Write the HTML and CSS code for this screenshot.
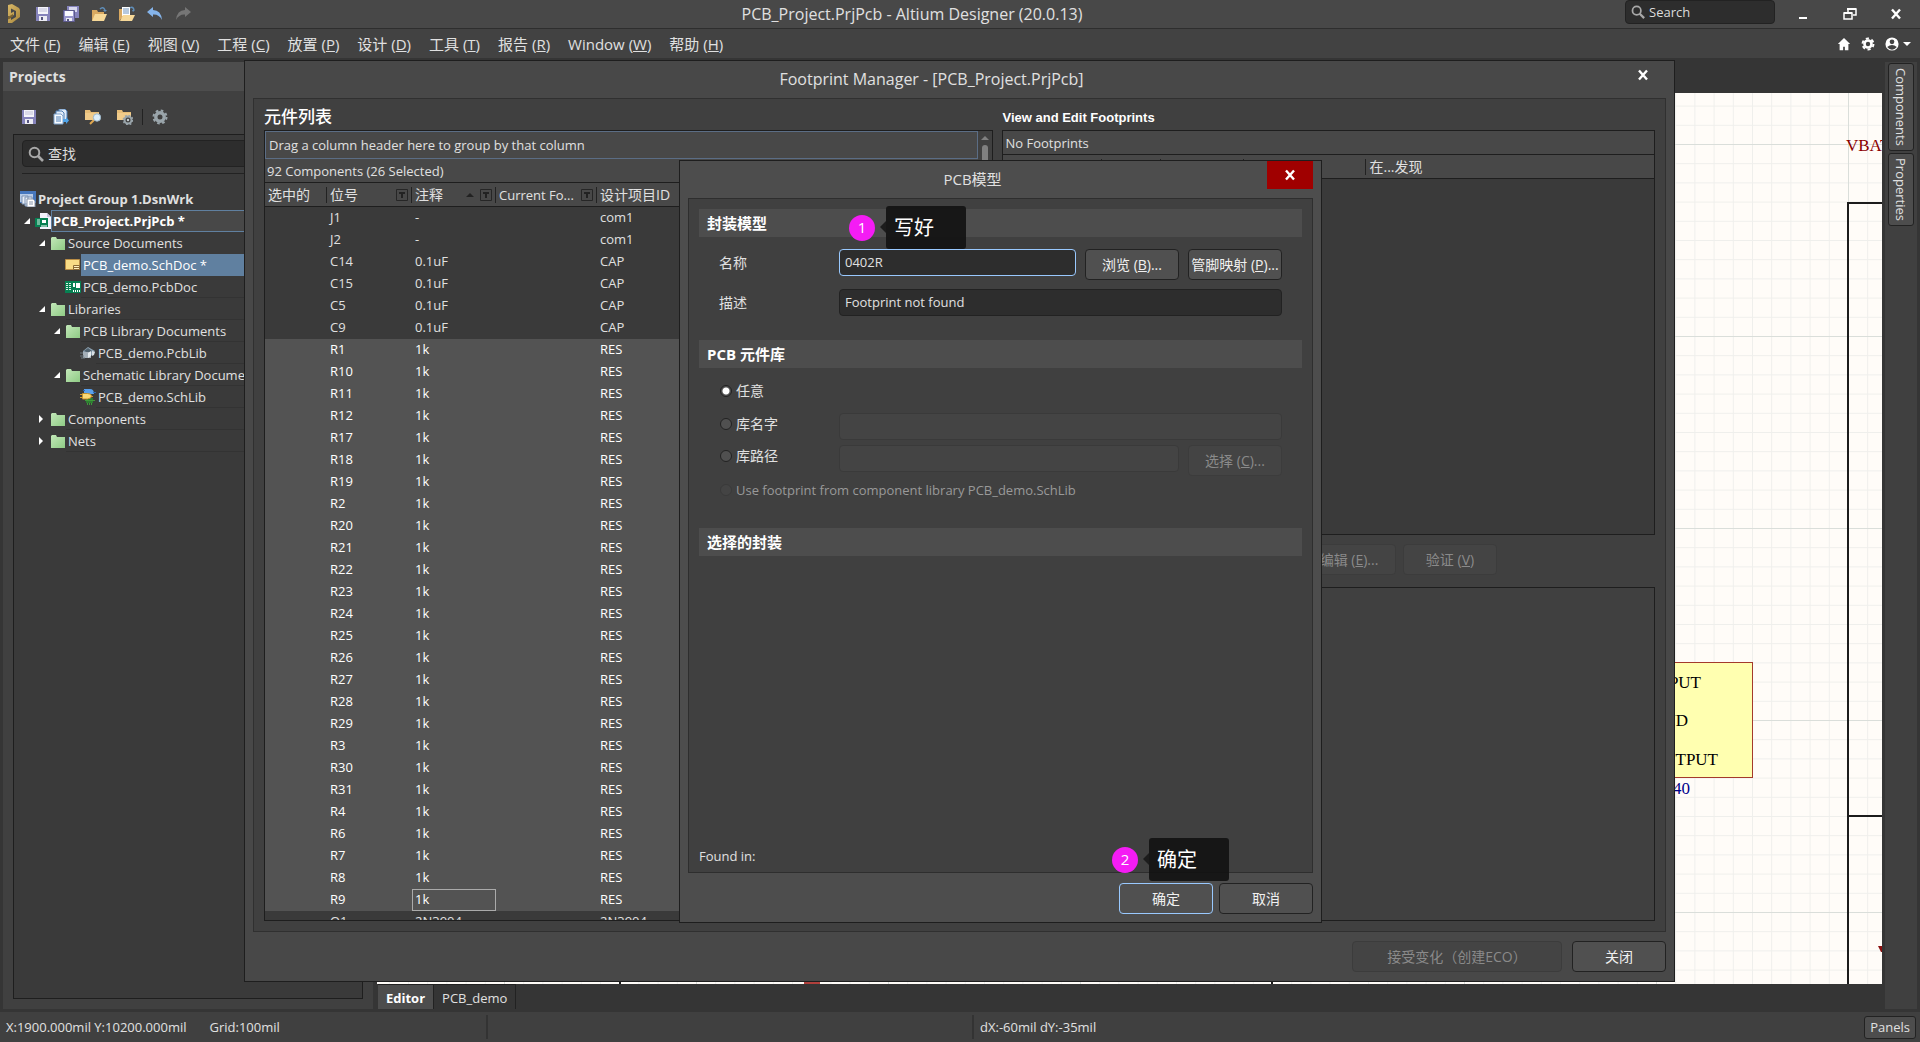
FILE: index.html
```html
<!DOCTYPE html>
<html lang="zh-CN">
<head>
    <meta charset="UTF-8">
    <meta name="viewport" content="width=device-width, initial-scale=1.0">
    <title>PCB_Project.PrjPcb - Altium Designer (20.0.13)</title>
    <link rel="stylesheet" href="styles.css">
</head>
<body>
    <!-- shared icons -->
    <svg class="defs" aria-hidden="true">
        <defs>
            <linearGradient id="gold" x1="0" y1="0" x2="1" y2="1">
                <stop offset="0" stop-color="#d9b968"/>
                <stop offset="1" stop-color="#a8863c"/>
            </linearGradient>
            <linearGradient id="green" x1="0" y1="0" x2="1" y2="1">
                <stop offset="0" stop-color="#c3e8b9"/>
                <stop offset="1" stop-color="#8fcb85"/>
            </linearGradient>
        </defs>
        <symbol id="i-logo" viewBox="0 0 14 20">
            <path d="M1 1 L5 0 L12 4 L13 6 V13 L5 19 L1 19 V15 L4 14 V16 L9 13 V7 L4 4.500 V9 L7 7.500 V11 L3 13 L1 12 Z" fill="url(#gold)"/>
            <path d="M1 13 L6 10 V12.500 L1 15.500 Z" fill="#7d6430"/>
        </symbol>
        <symbol id="i-save" viewBox="0 0 16 16">
            <path d="M1 1h14v14H1z" fill="#8583bb"/>
            <path d="M3 1h10v7H3z" fill="#f4f4fa"/>
            <path d="M4 3h8M4 5h8" stroke="#c0c0d8"/>
            <path d="M4 10h8v5H4z" fill="#ececf4"/>
            <path d="M6 11h2v3H6z" fill="#55547f"/>
        </symbol>
        <symbol id="i-saveall" viewBox="0 0 16 16">
            <path d="M4 0h12v12H4z" fill="#8583bb"/>
            <path d="M6 1h8v5H6z" fill="#d9d9ee"/>
            <path d="M.5 4.500h11v11H.5z" fill="#9896cc" stroke="#5c5a8c"/>
            <path d="M2 5h8v5H2z" fill="#fafaff"/>
            <path d="M3 12h6v3H3z" fill="#ececf4"/>
            <path d="M4 13h2v2H4z" fill="#55547f"/>
        </symbol>
        <symbol id="i-open" viewBox="0 0 16 16">
            <path d="M1 15V4h5l1 2h6v3" fill="#d9a961"/>
            <path d="M1 15L4 8h12l-3 7z" fill="#f6d898"/>
            <path d="M9 3q3-3 5 1" fill="none" stroke="#5f8db8" stroke-width="1.500"/>
            <path d="M12 4h4l-2 2z" fill="#5f8db8"/>
        </symbol>
        <symbol id="i-openprj" viewBox="0 0 16 16">
            <path d="M0 15V3h4v8" fill="#d9a961"/>
            <path d="M3 1h8v9H3z" fill="#fff"/>
            <path d="M4 3h6M4 5h6M4 7h6" stroke="#6f93bd"/>
            <path d="M1 15L4 9h12l-3 6z" fill="#f6d898"/>
            <path d="M11 2q3-2 4 2" fill="none" stroke="#5f8db8" stroke-width="1.500"/>
            <path d="M13 4h3l-2 2z" fill="#5f8db8"/>
        </symbol>
        <symbol id="i-undo" viewBox="0 0 16 16">
            <path d="M0 6L6 1V4Q14 4 15 14Q12 8 6 8.500V11Z" fill="#85b4ea"/>
        </symbol>
        <symbol id="i-redo" viewBox="0 0 16 16">
            <path d="M16 6L10 1V4Q2 4 1 14Q4 8 10 8.500V11Z" fill="#767676"/>
        </symbol>
        <symbol id="i-search" viewBox="0 0 16 16">
            <circle cx="6.500" cy="6.500" r="4.800" fill="none" stroke="#a8a8a8" stroke-width="2"/>
            <path d="M10 10l5 5" stroke="#a8a8a8" stroke-width="2.600"/>
        </symbol>
        <symbol id="i-copy" viewBox="0 0 16 16">
            <path d="M6 0h6l2 2v9H6z" fill="#dfeaf7" stroke="#4f7fb5"/>
            <path d="M3 2h6l2 2v9H3z" fill="#dfeaf7" stroke="#4f7fb5"/>
            <path d="M1 5h7l2 2v8H1z" fill="#f7fbff" stroke="#7fa3cc"/>
            <path d="M3 8h5M3 10h5M3 12h5" stroke="#4f7fb5"/>
            <path d="M10 10h3V8l3 3.500-3 3.500v-2h-3z" fill="#4fa3e8"/>
        </symbol>
        <symbol id="i-foldersearch" viewBox="0 0 16 16">
            <path d="M0 1h5l1 2h8v8H0z" fill="#e6bd78"/>
            <path d="M0 4h14v7H0z" fill="#f0cb8a"/>
            <path d="M5 15l4-4" stroke="#e0a850" stroke-width="2"/>
            <circle cx="12" cy="8.500" r="3.700" fill="#dceefa" stroke="#9bb6c9"/>
        </symbol>
        <symbol id="i-foldergear" viewBox="0 0 16 16">
            <path d="M0 1h5l1 2h8v8H0z" fill="#e6bd78"/>
            <path d="M0 4h14v7H0z" fill="#f0cb8a"/>
            <circle cx="11" cy="11" r="3.500" fill="#404040" stroke="#9aa5ab" stroke-width="2"/>
            <circle cx="11" cy="11" r="4.700" fill="none" stroke="#9aa5ab" stroke-width="1.400" stroke-dasharray="1.800 1.890"/>
            <circle cx="11" cy="11" r="1.200" fill="#c4ccd0"/>
        </symbol>
        <symbol id="i-gear" viewBox="0 0 16 16">
            <circle cx="8" cy="8" r="4.200" fill="none" stroke="currentColor" stroke-width="3.400"/>
            <circle cx="8" cy="8" r="6.500" fill="none" stroke="currentColor" stroke-width="2" stroke-dasharray="2.600 2.500"/>
        </symbol>
        <symbol id="i-cog" viewBox="0 0 16 16">
            <circle cx="8" cy="8" r="4" fill="none" stroke="#fff" stroke-width="3"/>
            <circle cx="8" cy="8" r="6.300" fill="none" stroke="#fff" stroke-width="2.200" stroke-dasharray="3.600 3"/>
        </symbol>
        <symbol id="i-home" viewBox="0 0 16 16">
            <path d="M8 1L1 8h2v7h4v-4h2v4h4V8h2z" fill="#fff"/>
        </symbol>
        <symbol id="i-user" viewBox="0 0 16 16">
            <circle cx="8" cy="8" r="7.500" fill="#fff"/>
            <circle cx="8" cy="5.500" r="2.700" fill="#424242"/>
            <path d="M2.500 11.500Q8 7 13.500 11.500Q11 14.500 8 14.500T2.500 11.500" fill="#424242"/>
        </symbol>
        <symbol id="i-close" viewBox="0 0 12 12">
            <path d="M2 1.500l8 9M10 1.500l-8 9" stroke="#fff" stroke-width="2.400"/>
        </symbol>
        <symbol id="i-group" viewBox="0 0 16 16">
            <path d="M0 0h16v12H0z" fill="#4677bd"/>
            <path d="M0 3h13v8H0z" fill="#b7cbe6"/>
            <path d="M2 5h6v8H2zM5 6h7v9H5z" fill="#e8eef7" stroke="#7d93b3"/>
            <path d="M7 8h6l2 2v6H7z" fill="#fff" stroke="#8795ab"/>
            <path d="M9 11h4M9 13h4" stroke="#8795ab"/>
        </symbol>
        <symbol id="i-project" viewBox="0 0 16 16">
            <path d="M5 0h7l4 4v12H5z" fill="#f3f2fb"/>
            <path d="M12 0v4h4" fill="#c9c6e0"/>
            <path d="M0 5h13v9H0z" fill="#078052"/>
            <path d="M2 7h3M2 9h3M2 11h3" stroke="#d8f2e4"/>
            <path d="M7 7h4v3H7z" fill="#fff"/>
            <path d="M7 12v2M9 12v2M11 12v2" stroke="#fff"/>
        </symbol>
        <symbol id="i-folder" viewBox="0 0 16 16">
            <path d="M1 3l1-1h4l1 2h8v11H1z" fill="url(#green)"/>
        </symbol>
        <symbol id="i-sch" viewBox="0 0 16 16">
            <path d="M.5 2.500h14v10H.5z" fill="#f8dc86" stroke="#b98d45"/>
            <path d="M8.500 8.500h6v4h-6z" fill="#fff0bd" stroke="#8b6a34"/>
            <path d="M9 10.500h5" stroke="#8b6a34"/>
        </symbol>
        <symbol id="i-pcb" viewBox="0 0 16 16">
            <path d="M0 2h16v12H0z" fill="#078052"/>
            <path d="M1 4.500h2M1 6.500h2M1 8.500h2M1 10.500h2M4 4.500h2M4 6.500h2M4 8.500h2M4 10.500h2" stroke="#d8f2e4"/>
            <path d="M8 4h2v4H8zM11 4h4v5h-4z" fill="#fff"/>
            <path d="M8.500 11v2M10.500 11v2M12.500 11v2M14.500 11v2" stroke="#fff"/>
        </symbol>
        <symbol id="i-pcblib" viewBox="0 0 16 16">
            <path d="M3 6l5-4 7 4-4 5H3z" fill="#8fa3b3"/>
            <path d="M4 6l4-3 4 3-3 2z" fill="#4f606c"/>
            <path d="M3 7h8v6H3z" fill="#a4afb8"/>
            <path d="M0 8h3M0 11h4M1 13h4" stroke="#6d7880"/>
            <path d="M8 8l3-2v5l-3 2z" fill="#e4eaee"/>
            <path d="M12 6l3 1-1 3-2 1z" fill="#d8dfe4"/>
        </symbol>
        <symbol id="i-schlib" viewBox="0 0 16 16">
            <path d="M4 0h6q4 0 4 5H4z" fill="#58a0ee"/>
            <path d="M13 3.500h3M3 1.500h2" stroke="#2c66b0"/>
            <path d="M6 9h7v5H6z" fill="#2c7d31"/>
            <path d="M5 11.500h10M7.500 14v2M9.500 14v2M11.500 14v2" stroke="#3f9a3a"/>
            <path d="M2.500 4.500h5q4 0 4 2.500t-4 3h-5z" fill="#f8d877" stroke="#c08e2a"/>
            <path d="M0 5.500h3M0 8.500h3M11 7.500h2" stroke="#d19a2e"/>
        </symbol>
        <symbol id="i-filter" viewBox="0 0 12 12">
            <path d="M.5.5h11v11H.5z" fill="none" stroke="#262626"/>
            <path d="M3 3h6v2H7v4H5V5H3z" fill="#222"/>
        </symbol>
    </svg>

    <header class="titlebar">
        <div class="quick">
            <svg class="logo"><use href="#i-logo"/></svg>
            <button aria-label="Save"><svg><use href="#i-save"/></svg></button>
            <button aria-label="Save All"><svg><use href="#i-saveall"/></svg></button>
            <button aria-label="Open"><svg><use href="#i-open"/></svg></button>
            <button aria-label="Open Project"><svg><use href="#i-openprj"/></svg></button>
            <button aria-label="Undo"><svg><use href="#i-undo"/></svg></button>
            <button aria-label="Redo"><svg><use href="#i-redo"/></svg></button>
        </div>
        <h1>PCB_Project.PrjPcb - Altium Designer (20.0.13)</h1>
        <div class="window-tools">
            <label class="search"><svg><use href="#i-search"/></svg><input type="text" placeholder="Search" aria-label="Search"></label>
            <button aria-label="Minimize"><svg viewBox="0 0 14 14"><path d="M3 10h8v2H3z" fill="#fff"/></svg></button>
            <button aria-label="Restore"><svg viewBox="0 0 14 14"><path d="M5 5V2h8v6h-3M1 6h8v6H1z" fill="none" stroke="#fff" stroke-width="1.500"/><path d="M4 1h9v2H4zM1 5h8v2H1z" fill="#fff"/></svg></button>
            <button aria-label="Close"><svg><use href="#i-close"/></svg></button>
        </div>
    </header>

    <nav class="menubar">
        <a href="#">文件 (<u>F</u>)</a>
        <a href="#">编辑 (<u>E</u>)</a>
        <a href="#">视图 (<u>V</u>)</a>
        <a href="#">工程 (<u>C</u>)</a>
        <a href="#">放置 (<u>P</u>)</a>
        <a href="#">设计 (<u>D</u>)</a>
        <a href="#">工具 (<u>T</u>)</a>
        <a href="#">报告 (<u>R</u>)</a>
        <a href="#">Window (<u>W</u>)</a>
        <a href="#">帮助 (<u>H</u>)</a>
        <div class="account">
            <button aria-label="Home"><svg><use href="#i-home"/></svg></button>
            <button aria-label="Preferences"><svg><use href="#i-cog"/></svg></button>
            <button aria-label="Account"><svg><use href="#i-user"/></svg><i class="caret"></i></button>
        </div>
    </nav>

    <main class="workspace">
        <aside class="projects">
            <h2>Projects</h2>
            <div class="panel-tools">
                <button aria-label="Save"><svg><use href="#i-save"/></svg></button>
                <button aria-label="Copy"><svg><use href="#i-copy"/></svg></button>
                <button aria-label="Explore"><svg><use href="#i-foldersearch"/></svg></button>
                <button aria-label="Options"><svg><use href="#i-foldergear"/></svg></button>
                <i class="divider"></i>
                <button class="gear" aria-label="Settings"><svg><use href="#i-gear"/></svg></button>
            </div>
            <div class="tree-box">
                <label class="search find"><svg><use href="#i-search"/></svg><input type="text" placeholder="查找" aria-label="查找"></label>
                <ul class="tree">
                    <li class="group"><svg><use href="#i-group"/></svg><span>Project Group 1.DsnWrk</span></li>
                    <li class="lv1 project"><i class="open"></i><svg><use href="#i-project"/></svg><span>PCB_Project.PrjPcb *</span></li>
                    <li class="lv2 plain"><i class="open"></i><svg><use href="#i-folder"/></svg><span>Source Documents</span></li>
                    <li class="lv3 active"><i></i><svg><use href="#i-sch"/></svg><span>PCB_demo.SchDoc *</span></li>
                    <li class="lv3"><i></i><svg><use href="#i-pcb"/></svg><span>PCB_demo.PcbDoc</span></li>
                    <li class="lv2"><i class="open"></i><svg><use href="#i-folder"/></svg><span>Libraries</span></li>
                    <li class="lv3"><i class="open"></i><svg><use href="#i-folder"/></svg><span>PCB Library Documents</span></li>
                    <li class="lv4"><i></i><svg><use href="#i-pcblib"/></svg><span>PCB_demo.PcbLib</span></li>
                    <li class="lv3"><i class="open"></i><svg><use href="#i-folder"/></svg><span>Schematic Library Documents</span></li>
                    <li class="lv4"><i></i><svg><use href="#i-schlib"/></svg><span>PCB_demo.SchLib</span></li>
                    <li class="lv2"><i class="shut"></i><svg><use href="#i-folder"/></svg><span>Components</span></li>
                    <li class="lv2"><i class="shut"></i><svg><use href="#i-folder"/></svg><span>Nets</span></li>
                </ul>
            </div>
        </aside>

        <section class="editor">
            <div class="sheet">
                <svg class="drawing" width="1505" height="891">
                    <defs>
                        <pattern id="minor" x="1471" y="51" width="19.200" height="19.200" patternUnits="userSpaceOnUse">
                            <path d="M0 .5H19.200M.5 0V19.200" stroke="#efefec"/>
                        </pattern>
                        <pattern id="major" x="1471" y="51" width="192" height="192" patternUnits="userSpaceOnUse">
                            <path d="M0 .5H192M.5 0V192" stroke="#dadeda"/>
                        </pattern>
                    </defs>
                    <rect width="1505" height="891" fill="url(#minor)"/>
                    <rect width="1505" height="891" fill="url(#major)"/>
                    <path d="M243 880V891M895 880V891M1505 110H1471V891M1471 723H1505" fill="none" stroke="#1c1c1c" stroke-width="2"/>
                    <path d="M427 890h16" stroke="#b0403c" stroke-width="2"/>
                    <rect x="1239.500" y="569.500" width="136" height="115" fill="#ffffb0" stroke="#a33a2c"/>
                    <g class="pins">
                        <text x="1324" y="595">INPUT</text>
                        <text x="1311" y="633">GND</text>
                        <text x="1341" y="672">OUTPUT</text>
                    </g>
                    <text class="value" x="1313" y="701">2940</text>
                    <text class="net" x="1469" y="58">VBAT</text>
                    <path d="M1501 853h4v6h-1z" fill="#8b1010"/>
                </svg>
            </div>
            <div class="doc-tabs">
                <button class="current">Editor</button>
                <button>PCB_demo</button>
            </div>
        </section>

        <aside class="side-tabs">
            <button>Components</button>
            <button>Properties</button>
        </aside>
    </main>

    <footer class="statusbar">
        <div class="coords"><span>X:1900.000mil Y:10200.000mil</span><span>Grid:100mil</span></div>
        <div class="hint"></div>
        <div class="delta">dX:-60mil dY:-35mil</div>
        <button>Panels</button>
    </footer>

    <section class="dialog manager" role="dialog" aria-labelledby="manager-title">
        <header>
            <h2 id="manager-title">Footprint Manager - [PCB_Project.PrjPcb]</h2>
            <button class="close" aria-label="Close"><svg><use href="#i-close"/></svg></button>
        </header>
        <div class="manager-body">
            <div class="left">
                <h3>元件列表</h3>
                <div class="grid-box">
                    <div class="grid-main">
                        <div class="group-by">Drag a column header here to group by that column</div>
                        <div class="count">92 Components (26 Selected)</div>
                        <table>
                            <colgroup><col class="c-sel"><col class="c-des"><col class="c-com"><col class="c-fp"><col></colgroup>
                            <thead>
                                <tr>
                                    <th><div>选中的</div></th>
                                    <th><div>位号<svg><use href="#i-filter"/></svg></div></th>
                                    <th><div>注释<i class="sort"></i><svg><use href="#i-filter"/></svg></div></th>
                                    <th class="latin"><div>Current Fo...<svg><use href="#i-filter"/></svg></div></th>
                                    <th><div>设计项目ID</div></th>
                                </tr>
                            </thead>
                            <tbody>
                                <tr><td></td><td>J1</td><td>-</td><td></td><td>com1</td></tr>
                                <tr><td></td><td>J2</td><td>-</td><td></td><td>com1</td></tr>
                                <tr><td></td><td>C14</td><td>0.1uF</td><td></td><td>CAP</td></tr>
                                <tr><td></td><td>C15</td><td>0.1uF</td><td></td><td>CAP</td></tr>
                                <tr><td></td><td>C5</td><td>0.1uF</td><td></td><td>CAP</td></tr>
                                <tr><td></td><td>C9</td><td>0.1uF</td><td></td><td>CAP</td></tr>
                                <tr class="sel"><td></td><td>R1</td><td>1k</td><td></td><td>RES</td></tr>
                                <tr class="sel"><td></td><td>R10</td><td>1k</td><td></td><td>RES</td></tr>
                                <tr class="sel"><td></td><td>R11</td><td>1k</td><td></td><td>RES</td></tr>
                                <tr class="sel"><td></td><td>R12</td><td>1k</td><td></td><td>RES</td></tr>
                                <tr class="sel"><td></td><td>R17</td><td>1k</td><td></td><td>RES</td></tr>
                                <tr class="sel"><td></td><td>R18</td><td>1k</td><td></td><td>RES</td></tr>
                                <tr class="sel"><td></td><td>R19</td><td>1k</td><td></td><td>RES</td></tr>
                                <tr class="sel"><td></td><td>R2</td><td>1k</td><td></td><td>RES</td></tr>
                                <tr class="sel"><td></td><td>R20</td><td>1k</td><td></td><td>RES</td></tr>
                                <tr class="sel"><td></td><td>R21</td><td>1k</td><td></td><td>RES</td></tr>
                                <tr class="sel"><td></td><td>R22</td><td>1k</td><td></td><td>RES</td></tr>
                                <tr class="sel"><td></td><td>R23</td><td>1k</td><td></td><td>RES</td></tr>
                                <tr class="sel"><td></td><td>R24</td><td>1k</td><td></td><td>RES</td></tr>
                                <tr class="sel"><td></td><td>R25</td><td>1k</td><td></td><td>RES</td></tr>
                                <tr class="sel"><td></td><td>R26</td><td>1k</td><td></td><td>RES</td></tr>
                                <tr class="sel"><td></td><td>R27</td><td>1k</td><td></td><td>RES</td></tr>
                                <tr class="sel"><td></td><td>R28</td><td>1k</td><td></td><td>RES</td></tr>
                                <tr class="sel"><td></td><td>R29</td><td>1k</td><td></td><td>RES</td></tr>
                                <tr class="sel"><td></td><td>R3</td><td>1k</td><td></td><td>RES</td></tr>
                                <tr class="sel"><td></td><td>R30</td><td>1k</td><td></td><td>RES</td></tr>
                                <tr class="sel"><td></td><td>R31</td><td>1k</td><td></td><td>RES</td></tr>
                                <tr class="sel"><td></td><td>R4</td><td>1k</td><td></td><td>RES</td></tr>
                                <tr class="sel"><td></td><td>R6</td><td>1k</td><td></td><td>RES</td></tr>
                                <tr class="sel"><td></td><td>R7</td><td>1k</td><td></td><td>RES</td></tr>
                                <tr class="sel"><td></td><td>R8</td><td>1k</td><td></td><td>RES</td></tr>
                                <tr class="sel"><td></td><td>R9</td><td class="focus">1k</td><td></td><td>RES</td></tr>
                                <tr><td></td><td>Q1</td><td>2N3904</td><td></td><td>2N3904</td></tr>
                            </tbody>
                        </table>
                    </div>
                    <div class="scroll"><i class="up"></i><i class="thumb"></i></div>
                </div>
            </div>
            <div class="right">
                <h3>View and Edit Footprints</h3>
                <div class="grid-box footprints">
                    <div class="count">No Footprints</div>
                    <table>
                        <colgroup><col class="f1"><col class="f2"><col class="f3"><col class="f4"><col></colgroup>
                        <thead>
                            <tr><th></th><th></th><th></th><th></th><th><div>在...发现</div></th></tr>
                        </thead>
                    </table>
                </div>
                <div class="fp-actions">
                    <button disabled>编辑 (<u>E</u>)...</button>
                    <button disabled>验证 (<u>V</u>)</button>
                </div>
                <div class="preview"></div>
            </div>
        </div>
        <footer>
            <button class="eco" disabled>接受变化（创建ECO）</button>
            <button>关闭</button>
        </footer>
    </section>

    <section class="dialog model" role="dialog" aria-labelledby="model-title">
        <header>
            <h2 id="model-title">PCB模型</h2>
            <button class="close" aria-label="Close"><svg><use href="#i-close"/></svg></button>
        </header>
        <form class="model-body">
            <h3>封装模型</h3>
            <div class="fields">
                <div class="row">
                    <label for="fp-name">名称</label>
                    <input id="fp-name" class="focused" type="text" value="0402R">
                    <button type="button">浏览 (<u>B</u>)...</button>
                    <button type="button">管脚映射 (<u>P</u>)...</button>
                </div>
                <div class="row">
                    <label for="fp-desc">描述</label>
                    <input id="fp-desc" type="text" value="Footprint not found">
                </div>
            </div>
            <h3>PCB 元件库</h3>
            <div class="fields library">
                <div class="row">
                    <label><input type="radio" name="lib" checked>任意</label>
                </div>
                <div class="row">
                    <label><input type="radio" name="lib">库名字</label>
                    <input type="text" aria-label="库名字" disabled>
                </div>
                <div class="row">
                    <label><input type="radio" name="lib">库路径</label>
                    <input type="text" aria-label="库路径" disabled>
                    <button type="button" disabled>选择 (<u>C</u>)...</button>
                </div>
                <div class="row">
                    <label class="wide off"><input type="radio" name="lib" disabled>Use footprint from component library PCB_demo.SchLib</label>
                </div>
            </div>
            <h3>选择的封装</h3>
            <p class="found">Found in:</p>
        </form>
        <footer>
            <button class="default">确定</button>
            <button>取消</button>
        </footer>
        <div class="step step-name"><b>1</b><span>写好</span></div>
        <div class="step step-ok"><b>2</b><span>确定</span></div>
    </section>
</body>
</html>
```
FILE: styles.css
```css
* {
    box-sizing: border-box;
}
body {
    margin: 0;
    height: 100vh;
    display: flex;
    flex-direction: column;
    overflow: hidden;
    background: #353535;
    color: #e0e0e0;
    font: 13px/22px "Open Sans", "Noto Sans CJK SC", sans-serif;
}
h1, h2, h3, p, ul {
    margin: 0;
    padding: 0;
    font-weight: normal;
}
button, input {
    font: inherit;
    color: inherit;
    margin: 0;
    padding: 0;
}
button {
    border: 0;
    background: none;
    white-space: nowrap;
}
svg {
    width: 16px;
    height: 16px;
    display: block;
    flex: none;
}
.defs {
    position: absolute;
    width: 0;
    height: 0;
}

/* title and menu */
.titlebar {
    height: 29px;
    flex: none;
    display: grid;
    grid-template-columns: 1fr auto 1fr;
    background: #484848;
    border-bottom: 1px solid #2e2e2e;
}
.titlebar h1 {
    font-size: 16px;
    line-height: 28px;
    padding-right: 96px;
}
.quick {
    display: flex;
    align-items: center;
    gap: 12px;
    padding-left: 7px;
}
.quick .logo {
    width: 14px;
    height: 20px;
    margin-right: 2px;
}
.window-tools {
    display: flex;
    justify-content: flex-end;
    gap: 33px;
    padding-right: 18px;
}
.window-tools svg {
    width: 14px;
    height: 14px;
}
.search {
    display: flex;
    align-items: center;
    gap: 4px;
    padding: 0 5px;
    background: #2d2d2d;
    border: 1px solid #222;
    border-radius: 4px;
}
.window-tools .search {
    width: 150px;
    height: 24px;
    margin-right: -12px;
}
.search input {
    width: 100%;
    min-width: 0;
    border: 0;
    outline: 0;
    background: none;
}
.search input::placeholder {
    color: #dcdcdc;
}
.menubar {
    height: 31px;
    flex: none;
    display: flex;
    align-items: center;
    gap: 18px;
    padding: 0 9px 0 10px;
    background: #424242;
    border-bottom: 2px solid #353535;
    font-size: 15px;
}
.menubar a {
    color: inherit;
    text-decoration: none;
}
.account {
    display: flex;
    align-items: center;
    gap: 10px;
    margin-left: auto;
}
.account button {
    display: flex;
    align-items: center;
    gap: 4px;
}
.account svg {
    width: 14px;
    height: 14px;
}
.caret {
    border: 4px solid transparent;
    border-top-color: #fff;
    border-bottom: 0;
}

/* workspace */
.workspace {
    flex: 1;
    min-height: 0;
    display: flex;
    padding: 2px 3px 3px;
}
.projects {
    width: 370px;
    flex: none;
    display: flex;
    flex-direction: column;
    background: #404040;
    padding-bottom: 10px;
}
.projects h2 {
    height: 29px;
    padding-left: 6px;
    background: #4d4d4d;
    font-size: 14px;
    font-weight: bold;
    line-height: 29px;
}
.panel-tools {
    height: 43px;
    flex: none;
    display: flex;
    align-items: center;
    gap: 16px;
    padding: 9px 0 0 18px;
}
.panel-tools .divider {
    width: 1px;
    height: 16px;
    margin: 0 -7px;
    background: #222;
}
.gear {
    color: #9aa5ab;
}
.tree-box {
    flex: 1;
    margin: 0 10px;
    border: 1px solid #1e1e1e;
    background: #3a3a3a;
}
.find {
    height: 27px;
    margin: 5px 8px 6px;
    font-size: 14px;
}
.tree {
    border-top: 1px solid #222;
    margin: 0 8px;
    padding-top: 14px;
    list-style: none;
}
.tree li {
    display: flex;
    align-items: center;
    height: 22px;
    margin-left: -2px;
    white-space: nowrap;
}
.tree span {
    flex: 1;
    height: 22px;
    padding-left: 2px;
    line-height: 23px;
    border-bottom: 1px solid #333;
}
.tree .group span, .tree .plain span {
    border: 0;
}
.tree .group, .tree .project {
    font-weight: bold;
}
.tree .project span {
    padding-left: 1px;
    background: #484848;
    border: 1px solid #6080a0;
    color: #fff;
    line-height: 20px;
}
.tree .active span {
    background: #6080a0;
    border-color: #6080a0;
    color: #fff;
}
.tree i {
    width: 15px;
    display: flex;
    padding-left: 4px;
}
.tree .open::before {
    content: "";
    border: 3px solid transparent;
    border-right-color: #fff;
    border-bottom-color: #fff;
}
.tree .shut::before {
    content: "";
    border: 4px solid transparent;
    border-left-color: #fff;
    border-right: 0;
}
.tree .lv2 {
    padding-left: 15px;
}
.tree .lv3 {
    padding-left: 30px;
}
.tree .lv4 {
    padding-left: 45px;
}
.editor {
    flex: 1;
    min-width: 0;
    display: flex;
    flex-direction: column;
    padding: 31px 3px 0 4px;
}
.sheet {
    flex: 1;
    min-height: 0;
    background: #fffcf8;
    overflow: hidden;
}
.drawing {
    width: 1505px;
    height: 891px;
    font: 17px "Liberation Serif", serif;
    text-anchor: end;
}
.drawing .value {
    fill: #00008b;
}
.drawing .net {
    fill: #8b0000;
    text-anchor: start;
}
.doc-tabs {
    height: 25px;
    flex: none;
    display: flex;
    padding-left: 1px;
}
.doc-tabs button {
    padding: 2px 8px 0;
    border: solid #222;
    border-width: 1px 1px 0 0;
}
.doc-tabs .current {
    background: #4d4d4d;
    color: #fff;
    font-weight: bold;
}
.side-tabs {
    width: 32px;
    display: flex;
    flex-direction: column;
    align-items: center;
    gap: 2px;
    padding-top: 1px;
    background: #404040;
}
.side-tabs button {
    width: 26px;
    padding: 4px 0;
    writing-mode: vertical-rl;
    border: 1px solid #222;
    border-radius: 3px;
    background: #4d4d4d;
}
.statusbar {
    height: 30px;
    flex: none;
    display: grid;
    grid-template-columns: 488px 486px 1fr auto;
    align-items: center;
    padding-right: 4px;
    background: #404040;
}
.coords {
    display: flex;
    gap: 23px;
    padding-left: 6px;
    line-height: 24px;
}
.coords, .hint {
    height: 24px;
    border-right: 2px solid #333;
}
.delta {
    padding-left: 6px;
}
.statusbar button {
    height: 23px;
    padding: 0 5px;
    line-height: 20px;
    border: 1px solid #222;
    border-radius: 3px;
    background: #4d4d4d;
}

/* dialogs */
.dialog {
    position: absolute;
    display: flex;
    flex-direction: column;
    border: 1px solid #1e1e1e;
}
.dialog header {
    height: 37px;
    flex: none;
    display: grid;
    grid-template-columns: 1fr auto 1fr;
}
.dialog header h2 {
    grid-column: 2;
    padding-right: 56px;
    font-size: 15px;
    line-height: 36px;
}
.dialog .close {
    justify-self: end;
    width: 46px;
    height: 28px;
    display: flex;
    align-items: center;
    justify-content: center;
}
.close svg, .window-tools button:last-child svg {
    width: 12px;
    height: 12px;
}
.dialog footer, .fp-actions {
    display: flex;
    justify-content: flex-end;
}
.dialog footer button, .fp-actions button, .row button {
    width: 94px;
    height: 31px;
    border: 1px solid #222;
    border-radius: 4px;
    background: #505050;
    color: #f0f0f0;
    font-size: 14px;
}
.dialog button:disabled {
    border-color: #3c3c3c;
    background: #444;
    color: #8a8a8a;
}
.manager {
    inset: 60px 245px 60px 244px;
    background: #484848;
}
.manager header h2 {
    font-size: 16px;
}
.manager header .close {
    margin-right: 8px;
}
.manager-body {
    flex: 1;
    min-height: 0;
    display: grid;
    grid-template-columns: 730fr 653fr;
    gap: 9px;
    margin: 0 8px;
    padding: 0 10px 10px;
    border: 1px solid #303030;
    background: #404040;
}
.left, .right {
    min-width: 0;
    min-height: 0;
    display: flex;
    flex-direction: column;
}
.manager h3 {
    height: 31px;
    flex: none;
    color: #fff;
    font-size: 17px;
    font-weight: 500;
    line-height: 36px;
}
.manager .right h3 {
    font: bold 13px/38px "Liberation Sans", sans-serif;
}
.grid-box {
    flex: 1;
    min-height: 0;
    display: flex;
    overflow: hidden;
    border: 1px solid #1e1e1e;
    background: #3a3a3a;
}
.grid-main {
    flex: 1;
    min-width: 0;
}
.group-by {
    height: 28px;
    padding-left: 3px;
    border: 1px solid #5b6d85;
    background: #484848;
    line-height: 26px;
}
.count {
    height: 24px;
    flex: none;
    padding-left: 2px;
    border-bottom: 1px solid #1e1e1e;
    background: #484848;
    line-height: 24px;
}
.grid-box table {
    width: 100%;
    table-layout: fixed;
    border-spacing: 0;
}
.c-sel {
    width: 62px;
}
.c-des {
    width: 85px;
}
.c-com {
    width: 84px;
}
.c-fp {
    width: 101px;
}
.grid-box th {
    height: 24px;
    padding: 0;
    background: #484848;
    border-bottom: 1px solid #1e1e1e;
    font-size: 14px;
    font-weight: normal;
    text-align: left;
}
.grid-box .latin {
    font-size: 13px;
}
.grid-box th div {
    display: flex;
    align-items: center;
    height: 16px;
    padding: 0 4px 0 3px;
    white-space: nowrap;
}
.grid-box th:not(:last-child) {
    background: linear-gradient(#222, #222) right center / 1px 16px no-repeat #484848;
}
.grid-box th svg {
    width: 12px;
    height: 12px;
    margin-left: auto;
}
.sort {
    margin-left: auto;
    border: 4px solid transparent;
    border-top: 0;
    border-bottom-color: #222;
}
.grid-box .sort + svg {
    margin-left: 6px;
}
.grid-box td {
    height: 22px;
    padding: 0 0 1px 3px;
    line-height: 21px;
}
.grid-box .sel {
    background: #535353;
    color: #fff;
}
.grid-box .focus {
    outline: 1px solid #aaa;
    outline-offset: -1px;
}
.scroll {
    width: 14px;
    display: flex;
    flex-direction: column;
    align-items: center;
    gap: 5px;
    padding-top: 5px;
    background: #404040;
}
.scroll .up {
    border: 4px solid transparent;
    border-top: 0;
    border-bottom-color: #808080;
}
.scroll .thumb {
    width: 6px;
    height: 500px;
    border-radius: 3px;
    background: #808080;
}
.footprints {
    flex: none;
    height: 405px;
    flex-direction: column;
}
.f1 {
    width: 99px;
}
.f2 {
    width: 59px;
}
.f3 {
    width: 83px;
}
.f4 {
    width: 122px;
}
.fp-actions {
    gap: 7px;
    padding: 9px 158px 12px 0;
}
.preview {
    flex: 1;
    border: 1px solid #1e1e1e;
}
.manager footer {
    gap: 10px;
    padding: 9px 8px;
}
.manager footer .eco {
    width: 210px;
}

.model {
    left: 679px;
    top: 160px;
    width: 643px;
    height: 763px;
    background: #4d4d4d;
}
.model header .close {
    margin-right: 8px;
    background: #a00000;
}
.model-body {
    flex: 1;
    display: flex;
    flex-direction: column;
    margin: 0 8px;
    padding: 10px 10px 5px;
    border: 1px solid #2e2e2e;
    background: #404040;
}
.model h3 {
    height: 28px;
    padding-left: 8px;
    background: #4d4d4d;
    color: #fff;
    font-size: 15px;
    font-weight: bold;
    line-height: 28px;
}
.fields {
    display: flex;
    flex-direction: column;
    gap: 9px;
    padding: 12px 20px 24px;
}
.row {
    display: flex;
    align-items: flex-start;
    gap: 9px;
}
.row label {
    width: 111px;
    display: flex;
    align-items: center;
    font-size: 14px;
    line-height: 27px;
}
.row input[type="text"] {
    flex: 1;
    height: 27px;
    min-width: 0;
    padding: 0 5px 2px;
    border: 1px solid #222;
    border-radius: 4px;
    outline: 0;
    background: #2d2d2d;
}
.row input.focused {
    border-color: #99c9ff;
}
.row input[type="text"]:disabled {
    border-color: #3a3a3a;
    background: #444;
}
.row input[type="radio"] {
    appearance: none;
    width: 12px;
    height: 12px;
    margin: 0 4px 0 1px;
    border: 1px solid #222;
    border-radius: 50%;
    background: #505050;
}
.row input[type="radio"]:checked {
    background: radial-gradient(circle, #fff 3px, #505050 4px);
}
.row input[type="radio"]:disabled {
    border-color: #3a3a3a;
    background: #444;
}
.library {
    gap: 5px;
    padding: 12px 20px 29px;
}
.library label {
    height: 21px;
    line-height: 21px;
}
.library .wide {
    width: auto;
    height: 18px;
    font-size: 13px;
}
.library .off {
    color: #999;
}
.library .row:first-child {
    padding-bottom: 7px;
}
.found {
    margin-top: auto;
}
.model footer {
    gap: 6px;
    padding: 10px 8px 8px;
}
.model footer .default {
    border-color: #99c9ff;
}

/* step callouts over the form */
.step {
    position: absolute;
    display: flex;
    align-items: center;
    gap: 11px;
}
.step b {
    width: 26px;
    height: 26px;
    border-radius: 50%;
    background: #f41cf4;
    color: #fff;
    font-size: 15px;
    font-weight: normal;
    line-height: 24px;
    text-align: center;
}
.step span {
    position: relative;
    width: 80px;
    height: 43px;
    padding-left: 8px;
    border-radius: 3px;
    background: rgba(18, 18, 18, 0.9);
    color: #fff;
    font-size: 20px;
    line-height: 43px;
}
.step span::before {
    content: "";
    position: absolute;
    left: -6px;
    top: 15px;
    border: 6px solid transparent;
    border-right-color: #1c1c1c;
    border-left: 0;
}
.step-name {
    left: 169px;
    top: 45px;
}
.step-ok {
    left: 432px;
    top: 677px;
}
```
